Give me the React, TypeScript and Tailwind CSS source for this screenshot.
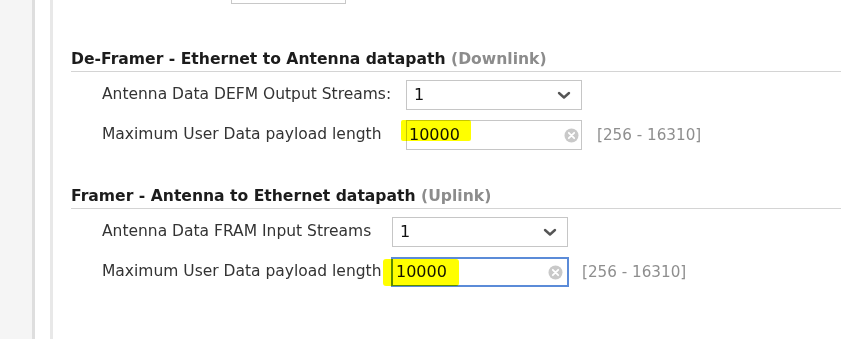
import React from "react";

const font = { fontFamily: '"DejaVu Sans", "Liberation Sans", sans-serif' };

function Chevron() {
  return (
    <svg width="14" height="9" viewBox="0 0 14 9" className="shrink-0">
      <path d="M2 2 L7 6.5 L12 2" fill="none" stroke="#555" strokeWidth="2.4" strokeLinecap="round" strokeLinejoin="round" />
    </svg>
  );
}

function ClearIcon() {
  return (
    <svg width="15" height="15" viewBox="0 0 15 15" className="shrink-0">
      <circle cx="7.5" cy="7.5" r="7" fill="#c9c9c9" />
      <path d="M4.8 4.8 L10.2 10.2 M10.2 4.8 L4.8 10.2" stroke="#fff" strokeWidth="1.8" strokeLinecap="round" />
    </svg>
  );
}

function SelectBox({ value }: { value: string }) {
  return (
    <div className="flex h-[30px] w-[176px] items-center justify-between border border-[#c6c6c6] bg-white pl-[7px] pr-[10px] text-[16px] text-[#111]">
      <span>{value}</span>
      <Chevron />
    </div>
  );
}

function InputBox({ value, focused }: { value: string; focused?: boolean }) {
  return (
    <div
      className={
        focused
          ? "flex h-[30px] w-[178px] items-center justify-between border-2 border-[#5b8bd8] bg-white pl-[3px] pr-[4px] text-[16px] text-[#111]"
          : "flex h-[30px] w-[176px] items-center justify-between border border-[#c6c6c6] bg-white pl-[2px] pr-[2px] text-[16px] text-[#111]"
      }
    >
      <span>{value}</span>
      <ClearIcon />
    </div>
  );
}

export default function App() {
  return (
    <div className="flex h-[339px] w-[841px] overflow-hidden bg-white" style={font}>
      <div className="w-[32px] shrink-0 bg-[#f5f5f5]" />
      <div className="w-[3px] shrink-0 bg-[#dedede]" />
      <div className="w-[15px] shrink-0 bg-white" />
      <div className="w-[3px] shrink-0 bg-[#e8e8e8]" />
      <div className="flex flex-1 flex-col pl-[18px]">
        <div className="ml-[160px] h-[4px] w-[115px] border-x border-b border-[#c8c8c8]" />

        {/* Section 1 */}
        <div className="mt-[45px] border-b border-[#d4d4d4] pb-[2px] text-[15.6px] font-bold leading-[20px] text-[#1c1c1c]">
          De-Framer - Ethernet to Antenna datapath <span className="text-[#8c8c8c]">(Downlink)</span>
        </div>
        <div className="mt-[8px] flex items-center pl-[31px]">
          <div className="w-[304px] text-[15.5px] text-[#333]">Antenna Data DEFM Output Streams:</div>
          <SelectBox value="1" />
        </div>
        <div className="relative mt-[10px] flex items-center pl-[31px]">
          <div className="w-[304px] text-[15.5px] text-[#333]">Maximum User Data payload length</div>
          <InputBox value="10000" />
          <div className="ml-[15px] text-[15.2px] text-[#8e8e8e]">[256 - 16310]</div>
          <div className="pointer-events-none absolute left-[330px] top-[0px] h-[21px] w-[70px] rounded-[2px] bg-[#ffff00] mix-blend-multiply" />
        </div>

        {/* Section 2 */}
        <div className="mt-[36px] border-b border-[#d4d4d4] pb-[2px] text-[15.6px] font-bold leading-[20px] text-[#1c1c1c]">
          Framer - Antenna to Ethernet datapath <span className="text-[#8c8c8c]">(Uplink)</span>
        </div>
        <div className="mt-[8px] flex items-center pl-[31px]">
          <div className="w-[290px] text-[15.5px] text-[#333]">Antenna Data FRAM Input Streams</div>
          <SelectBox value="1" />
        </div>
        <div className="relative mt-[10px] flex items-center pl-[31px]">
          <div className="w-[289px] text-[15.5px] text-[#333]">Maximum User Data payload length</div>
          <InputBox value="10000" focused />
          <div className="ml-[13px] text-[15.2px] text-[#8e8e8e]">[256 - 16310]</div>
          <div className="pointer-events-none absolute left-[312px] top-[2px] h-[27px] w-[76px] rounded-[3px] bg-[#ffff00] mix-blend-multiply" />
        </div>
      </div>
    </div>
  );
}
